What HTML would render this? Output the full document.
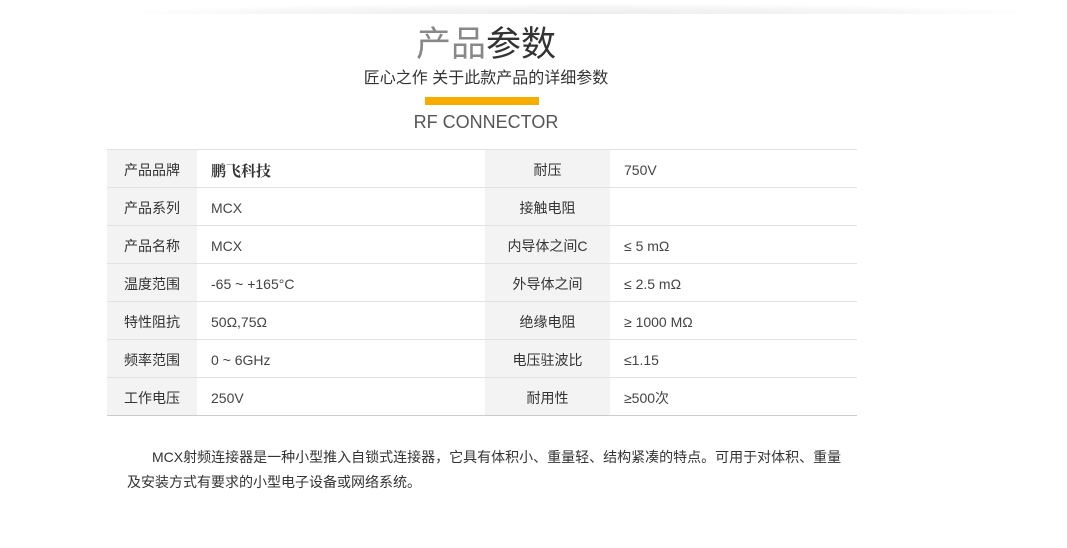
<!DOCTYPE html>
<html><head><meta charset="utf-8"><style>
body{margin:0;width:1067px;height:548px;background:#fff;font-family:"Liberation Sans","Noto Sans CJK SC",sans-serif;color:#333;position:relative;overflow:hidden}
.shadow{position:absolute;left:140px;top:4px;width:880px;height:10px;background:radial-gradient(ellipse at 50% 100%,#ececec 0%,#f6f6f6 50%,#fff 75%)}
.t{position:absolute;left:0;width:972px;text-align:center}
table{position:absolute;left:107px;top:149px;width:750px;border-collapse:collapse;font-size:14px}
td{height:34px;border-top:1px solid #e2e2e2;border-bottom:1px solid #e2e2e2;padding:3px 0 0 0;color:#444}
td.l{background:#f3f3f3;text-align:center;color:#333}
td.v{padding-left:14px}
tr:last-child td{border-bottom:1px solid #ccc}
p{position:absolute;left:127px;top:445px;width:722px;margin:0;font-size:14px;line-height:25px;text-indent:25px;color:#333}
</style></head><body>
<div class="shadow"></div>
<div class="t" style="top:23px;font-size:35px;line-height:44px;color:#333"><span style="color:#888">产品</span>参数</div>
<div class="t" style="top:68px;font-size:16px;line-height:22px;color:#333">匠心之作 关于此款产品的详细参数</div>
<div style="position:absolute;left:425px;top:97px;width:114px;height:8px;background:#f7ad00"></div>
<div class="t" style="top:111px;font-size:18px;line-height:22px;color:#555">RF CONNECTOR</div>
<table>
<colgroup><col style="width:90px"><col style="width:288px"><col style="width:125px"><col></colgroup>
<tr><td class="l">产品品牌</td><td class="v" style="font-family:'Noto Serif CJK SC',serif;font-size:15px;font-weight:bold;color:#333">鹏飞科技</td><td class="l">耐压</td><td class="v">750V</td></tr>
<tr><td class="l">产品系列</td><td class="v">MCX</td><td class="l">接触电阻</td><td class="v"></td></tr>
<tr><td class="l">产品名称</td><td class="v">MCX</td><td class="l">内导体之间C</td><td class="v">≤ 5 mΩ</td></tr>
<tr><td class="l">温度范围</td><td class="v">-65 ~ +165°C</td><td class="l">外导体之间</td><td class="v">≤ 2.5 mΩ</td></tr>
<tr><td class="l">特性阻抗</td><td class="v">50Ω,75Ω</td><td class="l">绝缘电阻</td><td class="v">≥ 1000 MΩ</td></tr>
<tr><td class="l">频率范围</td><td class="v">0 ~ 6GHz</td><td class="l">电压驻波比</td><td class="v">≤1.15</td></tr>
<tr><td class="l">工作电压</td><td class="v">250V</td><td class="l">耐用性</td><td class="v">≥500次</td></tr>
</table>
<p>MCX射频连接器是一种小型推入自锁式连接器，它具有体积小、重量轻、结构紧凑的特点。可用于对体积、重量<br>及安装方式有要求的小型电子设备或网络系统。</p>
</body></html>
